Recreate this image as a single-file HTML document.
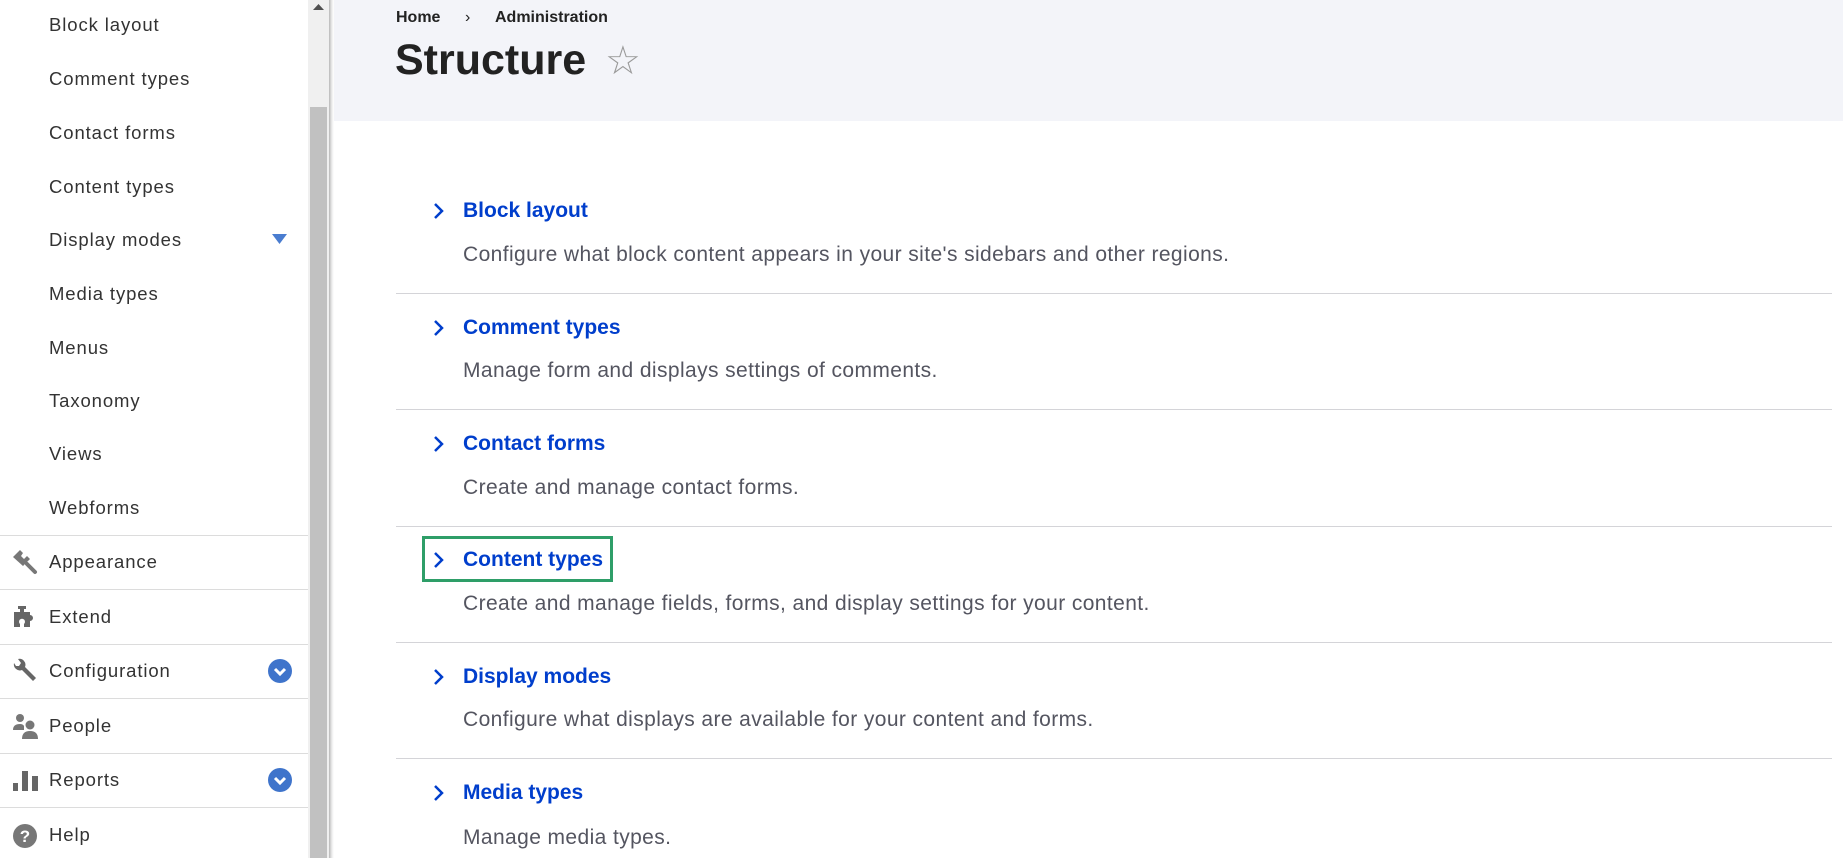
<!DOCTYPE html>
<html><head><meta charset="utf-8">
<style>
*{margin:0;padding:0;box-sizing:border-box}
body{width:1843px;height:858px;overflow:hidden;background:#fff;font-family:"Liberation Sans",sans-serif;position:relative}
.sb{position:absolute;left:0;top:0;width:308px;height:858px;background:#fff}
.si{position:absolute;left:49px;font-size:18.5px;color:#333;letter-spacing:0.9px;line-height:20px}
.hr{position:absolute;left:0;width:308px;height:1px;background:#dcdcdc}
.ic{position:absolute;left:11px;width:28px;height:28px}
.badge{position:absolute;left:268px;width:24px;height:24px;border-radius:50%;background:#3f74cb}
.track{position:absolute;left:308px;top:0;width:21px;height:858px;background:#f0f0f0}
.thumb{position:absolute;left:310px;top:107px;width:17px;height:751px;background:#c1c1c1}
.shadow{position:absolute;left:329px;top:0;width:5px;height:858px;background:linear-gradient(to right,#b8b8b8,#eee 60%,rgba(255,255,255,0))}
.hdr{position:absolute;left:334px;top:0;width:1509px;height:121px;background:#f3f4f9}
.bc{position:absolute;top:9px;font-size:16px;font-weight:bold;color:#222}
.h1{position:absolute;left:395px;top:35px;font-size:43px;font-weight:bold;color:#222;line-height:50px}
.star{position:absolute;left:605px;top:39px;font-size:40px;color:#9a9a9a;line-height:44px}
.t{position:absolute;left:463px;font-size:21px;font-weight:bold;color:#003ecc;line-height:24px}
.ch{position:absolute;left:432px;width:14px;height:16px}
.d{position:absolute;left:463px;font-size:21px;color:#545560;line-height:24px;letter-spacing:0.4px}
.dv{position:absolute;left:396px;width:1436px;height:1px;background:#d4d4d8}
</style></head><body>
<div class="sb">
<div class="si" style="top:15px">Block layout</div>
<div class="si" style="top:69px">Comment types</div>
<div class="si" style="top:123px">Contact forms</div>
<div class="si" style="top:177px">Content types</div>
<div class="si" style="top:230px">Display modes</div>
<svg style="position:absolute;left:272px;top:234px" width="15" height="11"><path d="M0 0H15L7.5 10Z" fill="#4a7dd0"/></svg>
<div class="si" style="top:284px">Media types</div>
<div class="si" style="top:338px">Menus</div>
<div class="si" style="top:391px">Taxonomy</div>
<div class="si" style="top:444px">Views</div>
<div class="si" style="top:498px">Webforms</div>
<div class="hr" style="top:535px"></div>
<svg class="ic" style="top:548px" viewBox="0 0 28 28"><path d="M2 9L9 2L12 5L10 8L13 11L16 8L19 11L12 18Z" fill="#777"/><path d="M16 16L24 24" stroke="#777" stroke-width="4" stroke-linecap="round"/></svg>
<div class="si" style="top:552px">Appearance</div>
<div class="hr" style="top:589px"></div>
<svg class="ic" style="top:603px" viewBox="0 0 28 28"><path d="M3 9H9V6H7V3H15V6H13V9H19V12A3 3 0 1 1 19 18V24H13V21A3 3 0 1 0 9 21V24H3Z" fill="#666"/></svg>
<div class="si" style="top:607px">Extend</div>
<div class="hr" style="top:644px"></div>
<svg class="ic" style="top:657px" viewBox="0 0 28 28"><path d="M3 6A6 6 0 0 0 11 13L22 24L25 21L14 10A6 6 0 0 0 7 2L10 6L8 9L5 9Z" fill="#666"/></svg>
<div class="si" style="top:661px">Configuration</div>
<div class="badge" style="top:659px"><svg width="24" height="24"><path d="M7 10L12 15L17 10" stroke="#fff" stroke-width="3" fill="none"/></svg></div>
<div class="hr" style="top:698px"></div>
<svg class="ic" style="top:712px" viewBox="0 0 28 28"><circle cx="9" cy="6" r="4" fill="#777"/><path d="M2 18Q2 12 9 12Q12 12 13 14L13 18Z" fill="#777"/><circle cx="19" cy="13" r="4.5" fill="#777"/><path d="M11 27Q11 19 19 19Q27 19 27 27Z" fill="#777"/></svg>
<div class="si" style="top:716px">People</div>
<div class="hr" style="top:753px"></div>
<svg class="ic" style="top:766px" viewBox="0 0 28 28"><rect x="2" y="17" width="5" height="8" fill="#666"/><rect x="11" y="5" width="6" height="20" fill="#666"/><rect x="21" y="10" width="6" height="15" fill="#666"/></svg>
<div class="si" style="top:770px">Reports</div>
<div class="badge" style="top:768px"><svg width="24" height="24"><path d="M7 10L12 15L17 10" stroke="#fff" stroke-width="3" fill="none"/></svg></div>
<div class="hr" style="top:807px"></div>
<svg class="ic" style="top:822px" viewBox="0 0 28 28"><circle cx="14" cy="14" r="12" fill="#777"/><text x="14" y="20" font-size="17" font-weight="bold" fill="#fff" text-anchor="middle" font-family="Liberation Sans">?</text></svg>
<div class="si" style="top:825px">Help</div>
</div>
<div class="track"></div>
<svg style="position:absolute;left:313px;top:3px" width="11" height="8"><path d="M0 7H11L5.5 1Z" fill="#505050"/></svg>
<div class="thumb"></div>
<div class="shadow"></div>
<div class="hdr"></div>
<div class="bc" style="left:396px">Home</div>
<div class="bc" style="left:465px;font-weight:normal">›</div>
<div class="bc" style="left:495px">Administration</div>
<div class="h1">Structure</div>
<div class="star">☆</div>

<svg class="ch" style="top:203px" viewBox="0 0 14 16"><path d="M3 1L10 8L3 15" stroke="#003ecc" stroke-width="2.5" fill="none"/></svg>
<div class="t" style="top:199px">Block layout</div>
<div class="d" style="top:243px">Configure what block content appears in your site's sidebars and other regions.</div>
<div class="dv" style="top:293px"></div>

<svg class="ch" style="top:320px" viewBox="0 0 14 16"><path d="M3 1L10 8L3 15" stroke="#003ecc" stroke-width="2.5" fill="none"/></svg>
<div class="t" style="top:316px">Comment types</div>
<div class="d" style="top:359px">Manage form and displays settings of comments.</div>
<div class="dv" style="top:409px"></div>

<svg class="ch" style="top:436px" viewBox="0 0 14 16"><path d="M3 1L10 8L3 15" stroke="#003ecc" stroke-width="2.5" fill="none"/></svg>
<div class="t" style="top:432px">Contact forms</div>
<div class="d" style="top:476px">Create and manage contact forms.</div>
<div class="dv" style="top:526px"></div>

<div style="position:absolute;left:422px;top:536px;width:191px;height:46px;border:3px solid #2e9e68"></div>
<svg class="ch" style="top:552px" viewBox="0 0 14 16"><path d="M3 1L10 8L3 15" stroke="#003ecc" stroke-width="2.5" fill="none"/></svg>
<div class="t" style="top:548px">Content types</div>
<div class="d" style="top:592px">Create and manage fields, forms, and display settings for your content.</div>
<div class="dv" style="top:642px"></div>

<svg class="ch" style="top:669px" viewBox="0 0 14 16"><path d="M3 1L10 8L3 15" stroke="#003ecc" stroke-width="2.5" fill="none"/></svg>
<div class="t" style="top:665px">Display modes</div>
<div class="d" style="top:708px">Configure what displays are available for your content and forms.</div>
<div class="dv" style="top:758px"></div>

<svg class="ch" style="top:785px" viewBox="0 0 14 16"><path d="M3 1L10 8L3 15" stroke="#003ecc" stroke-width="2.5" fill="none"/></svg>
<div class="t" style="top:781px">Media types</div>
<div class="d" style="top:826px">Manage media types.</div>
</body></html>
